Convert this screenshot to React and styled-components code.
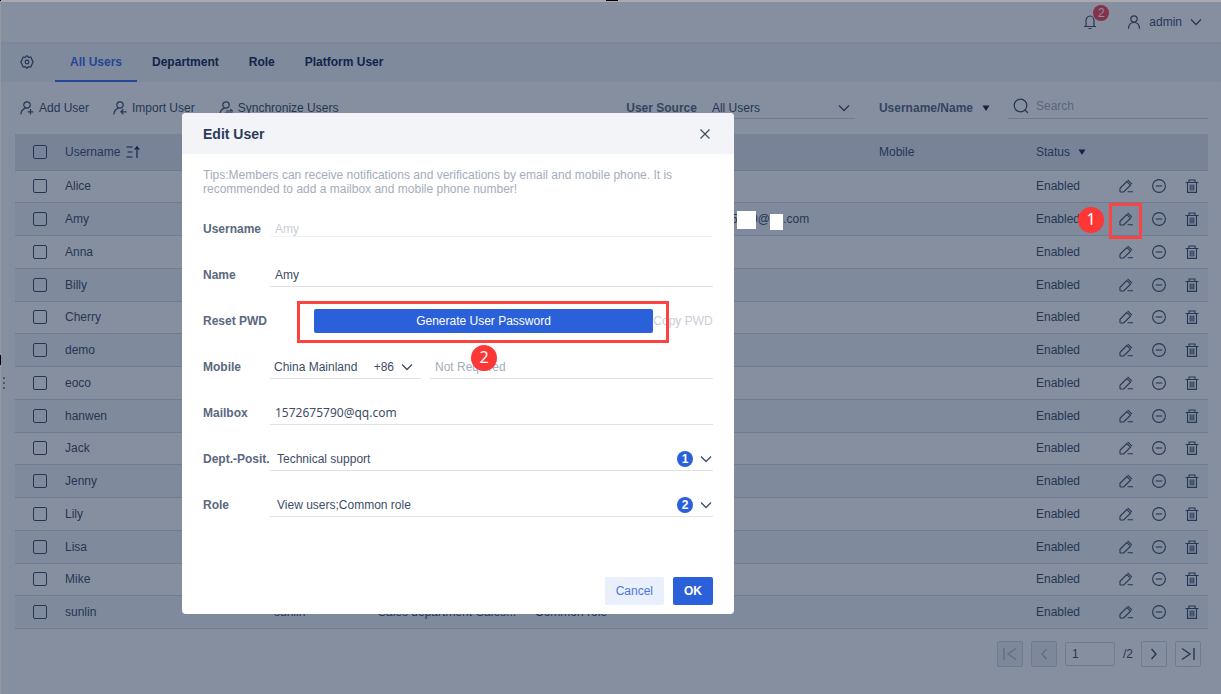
import React from 'react'
import styled, { createGlobalStyle } from 'styled-components'

const colors = {
  brand: '#2b60db',
  tab: '#3f6bea',
  text: '#3d4d66',
  heading: '#16284c',
  label: '#5a6880',
  muted: '#a4adbb',
  disabled: '#c9ced7',
  line: '#e0e2e6',
  rowLine: '#d1d6df',
  mark: '#fd4242',
  pin: '#fd3636',
}

const GlobalStyle = createGlobalStyle`
  * {
    box-sizing: border-box;
  }
  body {
    margin: 0;
    background: white;
    color: ${colors.text};
    font: 12px/16px "Liberation Sans", Arial, sans-serif;
  }
  button, input, select {
    font: inherit;
    color: inherit;
    margin: 0;
    padding: 0;
    border: 0;
    background: none;
    border-radius: 0;
    outline: 0;
  }
  button {
    cursor: pointer;
  }
`

const Svg = styled.svg`
  display: block;
  flex: none;
  fill: none;
  stroke: currentColor;
  stroke-width: ${props => props.$weight || 1};
`

const Icon = ({ size = 14, weight, children }) => (
  <Svg width={size} height={size} viewBox={`0 0 ${size} ${size}`} $weight={weight} aria-hidden="true">
    {children}
  </Svg>
)

const ChevronIcon = () => (
  <Icon size={12} weight={1.3}><path d="M1 3.5 6 8.5 11 3.5" /></Icon>
)

const CaretIcon = () => (
  <Icon size={8}><path d="M0.5 1.5h7L4 7z" fill="currentColor" stroke="none" /></Icon>
)

const GearIcon = () => (
  <Icon weight={1.2}>
    <path d="M5.4 2.4 7 0.7l1.600 1.700 2.300-0.400 0.900 2.400 1.400 2.600-1.400 2.600-0.900 2.400-2.300-0.400L7 13.300l-1.600-1.700-2.300 0.400-0.900-2.400L0.800 7l1.400-2.600L3.100 2z" strokeLinejoin="round" />
    <circle cx="7" cy="7" r="1.8" />
  </Icon>
)

const BellIcon = () => (
  <Icon size={16} weight={1.2}>
    <path d="M4 12V6.500a4 4.500 0 0 1 8 0V12M2 12.500h12M6.5 14.500h3" />
  </Icon>
)

const UserIcon = ({ action }) => (
  <Icon weight={1.2}>
    <circle cx="7" cy="4" r="3.2" />
    {action ? <path d="M0.8 13.5c0.4-3.5 2-5.5 4.7-6.3" /> : <path d="M1.5 13.8c0-4 2-6.3 5.5-6.3s5.5 2.3 5.5 6.3" />}
    {action === 'add' && <path d="M10.5 8v5.500M7.700 10.800h5.600" />}
    {action === 'import' && <path d="M13.5 10.800H8M10.400 8.200 7.900 10.800l2.500 2.600" />}
    {action === 'sync' && <path d="M7 10h6.5l-2.2-1.8M13.5 12H7l2.2 1.8" />}
  </Icon>
)

const SearchIcon = () => (
  <Icon size={16} weight={1.2}><circle cx="7.5" cy="7.5" r="6.3" /><path d="m12 12 3 3" /></Icon>
)

const SortIcon = () => (
  <Icon weight={1.2}>
    <path d="M0.5 2h6M1.5 7h5M0.5 12h6M11 13V2M8.7 4.6 11 1.8l2.3 2.8" />
  </Icon>
)

const EditIcon = () => (
  <Icon weight={1.1}>
    <path d="M1 13V9.300L7.800 2.500l3.700 3.700L4.700 13H1M8.600 0.800l4.400 4.400M8.600 12.800H14" />
  </Icon>
)

const DisableIcon = () => (
  <Icon weight={1.1}><circle cx="7" cy="7" r="6.400" /><path d="M3.800 7h6.400" /></Icon>
)

const TrashIcon = () => (
  <Icon weight={1.1}>
    <path d="M0.500 3.500h13M4 3.200V1h6v2.200M2.500 3.500v9.900h9V3.500M5.200 5.500v6M7 5.500v6M8.800 5.500v6" />
  </Icon>
)

const CloseIcon = () => (
  <Icon size={12} weight={1.2}><path d="m1.5 1.5 9 9M10.5 1.5l-9 9" /></Icon>
)

const Page = styled.div`
  position: relative;
  min-height: 100vh;
`

const Header = styled.header`
  height: 42px;
  padding: 2px 19px 0 0;
  display: flex;
  align-items: center;
  justify-content: flex-end;
  gap: 29px;
`

const BellButton = styled.button`
  position: relative;
`

const BellBadge = styled.span`
  position: absolute;
  top: -9px;
  left: 11px;
  width: 16px;
  height: 16px;
  border-radius: 50%;
  background: #fb4754;
  color: white;
`

const AccountButton = styled.button`
  display: flex;
  align-items: center;
  gap: 8px;
`

const TabBar = styled.nav`
  height: 40px;
  padding-left: 20px;
  display: flex;
  background: #f0f4f8;
  box-shadow: inset 0 2px 2px #eaeef3;
`

const SettingsButton = styled.button`
  width: 35px;
`

const Tab = styled.a`
  padding: 0 15px;
  line-height: 40px;
  font-weight: bold;
  text-decoration: none;
  color: ${props => (props.$active ? colors.tab : colors.heading)};
  box-shadow: inset 0 -2px ${props => (props.$active ? colors.tab : 'transparent')};
`

const Toolbar = styled.div`
  height: 52px;
  padding: 0 13px 0 20px;
  display: flex;
  align-items: center;
  gap: 24px;
`

const ToolButton = styled.button`
  display: flex;
  align-items: center;
  gap: 5px;
`

const Filters = styled.div`
  margin-left: auto;
  display: flex;
  align-items: center;
  gap: 24px;
`

const FilterLabel = styled.label`
  font-weight: bold;
  color: ${colors.label};
`

const SourceField = styled.div`
  display: flex;
  align-items: center;
  gap: 8px;
`

const SelectBox = styled.div`
  flex: ${props => (props.$width ? 'none' : 1)};
  width: ${props => (props.$width ? `${props.$width}px` : 'auto')};
  height: ${props => (props.$slim ? 22 : 24)}px;
  display: grid;
  align-items: center;
  border-bottom: 1px solid ${props => (props.$slim ? colors.rowLine : colors.line)};

  > * {
    grid-area: 1 / 1;
  }
`

const Select = styled.select`
  appearance: none;
  width: 100%;
  height: 100%;
  padding: 0 ${props => (props.$tight ? 4 : 7)}px;
`

const SelectEnd = styled.span`
  justify-self: end;
  padding-right: ${props => props.$inset || 1}px;
  display: flex;
  align-items: center;
  gap: 7px;
  pointer-events: none;
`

const FieldMenuButton = styled.button`
  display: flex;
  align-items: center;
  gap: 9px;
  margin-right: -6px;
  font-weight: bold;
  color: ${colors.label};

  svg {
    color: ${colors.heading};
  }
`

const SearchBox = styled.label`
  width: 200px;
  height: 22px;
  padding: 0 0 4px 5px;
  display: flex;
  align-items: center;
  gap: 7px;
  border-bottom: 1px solid ${colors.rowLine};
`

const SearchInput = styled.input`
  flex: 1;
  min-width: 0;

  &::placeholder {
    color: ${colors.muted};
  }
`

const TableWrapper = styled.main`
  padding: 0 13px 0 15px;
`

const Table = styled.table`
  width: 100%;
  height: 495px;
  table-layout: fixed;
  border-collapse: collapse;
`

const Col = styled.col`
  width: ${props => (props.$width ? `${props.$width}px` : 'auto')};
`

const HeadRow = styled.tr`
  height: 36px;
  background: #e2e6ee;
  border-bottom: 1px solid ${colors.rowLine};
`

const Row = styled.tr`
  border-bottom: 1px solid ${colors.rowLine};

  &:nth-child(even) {
    background: #f1f4f8;
  }
`

const HeadCell = styled.th`
  padding: 0 12px;
  font-weight: normal;
  text-align: left;
`

const HeadLabel = styled.span`
  display: flex;
  align-items: center;
  gap: ${props => props.$gap}px;

  svg {
    color: ${colors.heading};
  }
`

const Cell = styled.td`
  padding: 0 0 0 12px;
  white-space: nowrap;
`

const CheckCell = styled.td`
  padding: 0 0 0 18px;
`

const Checkbox = styled.input.attrs({ type: 'checkbox' })`
  display: block;
  appearance: none;
  width: 14px;
  height: 14px;
  border: 1px solid ${colors.text};
  border-radius: 2px;
`

const ActionCell = styled.td`
  padding: 0;
`

const Actions = styled.div`
  display: flex;
`

const ActionButton = styled.button`
  flex: 1;
  display: flex;
  justify-content: center;
`

const Pagination = styled.nav`
  padding: 12px 20px 0 0;
  display: flex;
  justify-content: flex-end;
  align-items: center;
  gap: 8px;
`

const PageButton = styled.button`
  width: 26px;
  height: 26px;
  display: flex;
  align-items: center;
  justify-content: center;
  border: 1px solid ${colors.rowLine};
  border-radius: 2px;

  &:disabled {
    color: #b4bcc9;
    background: #edf0f5;
  }
`

const PageInput = styled.input`
  width: 50px;
  height: 24px;
  padding: 0 6px;
  border: 1px solid ${colors.rowLine};
  border-radius: 2px;
`

const ResizeHandle = styled.div`
  position: absolute;
  top: 377px;
  left: 3px;
  display: grid;
  gap: 3px;

  i {
    width: 2px;
    height: 2px;
    background: #8792a6;
  }
`

const Overlay = styled.div`
  position: absolute;
  inset: 0;
  padding: 111px 0 0 181px;
  background: rgba(14, 32, 65, 0.5);
  border-top: 2px solid #a9a9ae;
  border-left: 1px solid #98989e;
`

const Dialog = styled.section`
  width: 552px;
  max-width: 100%;
  background: white;
  border-radius: 4px;
  overflow: hidden;
`

const DialogHeader = styled.header`
  height: 41px;
  padding: 0 23px 0 21px;
  display: flex;
  align-items: center;
  justify-content: space-between;
  background: #f2f4f8;
`

const DialogTitle = styled.h2`
  margin: 0;
  font-size: 14px;
  color: #2c3c5a;
`

const DialogBody = styled.form`
  padding: 14px 21px 0;
`

const Tips = styled.p`
  margin: 0 0 21px;
  line-height: 14px;
  color: ${colors.muted};
`

const Fields = styled.div`
  display: grid;
  gap: 22px;
`

const Field = styled.div`
  height: 24px;
  display: flex;
  align-items: center;
`

const FieldLabel = styled.label`
  width: 67px;
  flex: none;
  font-weight: bold;
  color: ${colors.label};
  white-space: nowrap;
`

const TextInput = styled.input`
  flex: 1;
  min-width: 0;
  height: 24px;
  padding: 0 5px;
  border-bottom: 1px solid ${colors.line};

  &::placeholder {
    color: ${colors.muted};
  }

  &:disabled {
    height: 16px;
    color: ${colors.disabled};
    border-color: #f0f1f4;
  }
`

const MailInput = styled(TextInput)`
  font-family: "Noto Sans", sans-serif;
`

const MobileFields = styled.div`
  flex: 1;
  display: flex;
  gap: 9px;
`

const CountBadge = styled.span`
  width: 16px;
  height: 16px;
  border-radius: 50%;
  background: ${colors.brand};
  color: white;
  font-weight: bold;
  text-align: center;
`

const GenerateWrapper = styled.div`
  position: relative;
  flex: 1;
  margin-left: 44px;
`

const GenerateButton = styled.button`
  width: 100%;
  height: 24px;
  display: block;
  background: ${colors.brand};
  border-radius: 2px;
  color: white;
`

const CopyButton = styled.button`
  width: 60px;
  color: ${colors.disabled};
`

const DialogFooter = styled.footer`
  padding: 60px 0 9px;
  display: flex;
  justify-content: flex-end;
  gap: 9px;
`

const DialogButton = styled.button`
  height: 28px;
  padding: 0 11px;
  border-radius: 2px;
  font-weight: ${props => (props.$primary ? 'bold' : 'normal')};
  background: ${props => (props.$primary ? colors.brand : '#e9effb')};
  color: ${props => (props.$primary ? 'white' : '#4a77e0')};
`

// Walkthrough marks drawn over the interface
const GenerateMark = styled.div`
  position: absolute;
  inset: -8px -16px -10px -17px;
  border: 3px solid ${colors.mark};
  pointer-events: none;
`

const EditMark = styled.div`
  position: absolute;
  top: 203px;
  right: 79px;
  width: 33px;
  height: 36px;
  border: 3px solid ${colors.mark};
`

const Pin = styled.span`
  position: absolute;
  top: ${props => props.$top}px;
  left: ${props => (props.$left ? `${props.$left}px` : 'auto')};
  right: ${props => (props.$right ? `${props.$right}px` : 'auto')};
  width: 26px;
  height: 26px;
  border-radius: 50%;
  background: ${colors.pin};
  color: white;
  font: 16px/24px "Noto Sans", sans-serif;
  text-align: center;
`

const Mask = styled.div`
  position: absolute;
  top: ${props => props.$top}px;
  left: ${props => props.$left}px;
  width: ${props => props.$width}px;
  height: ${props => props.$height}px;
  background: white;
`

const FrameTick = styled.div`
  position: absolute;
  top: ${props => props.$top || 0}px;
  left: ${props => props.$left || 0}px;
  width: ${props => props.$width}px;
  height: ${props => props.$height}px;
  background: black;
`

const tabs = ['All Users', 'Department', 'Role', 'Platform User']

const users = [
  { username: 'Alice' },
  { username: 'Amy', mailbox: '1572675790@qq.com' },
  { username: 'Anna' },
  { username: 'Billy' },
  { username: 'Cherry' },
  { username: 'demo' },
  { username: 'eoco' },
  { username: 'hanwen' },
  { username: 'Jack' },
  { username: 'Jenny' },
  { username: 'Lily' },
  { username: 'Lisa' },
  { username: 'Mike' },
  { username: 'sunlin', name: 'sunlin', department: 'Sales department-Sales...', role: 'Common role' },
]

const UserRow = ({ user }) => (
  <Row>
    <CheckCell><Checkbox aria-label={user.username} /></CheckCell>
    <Cell>{user.username}</Cell>
    <Cell>{user.name}</Cell>
    <Cell>{user.department}</Cell>
    <Cell>{user.role}</Cell>
    <Cell>{user.mailbox}</Cell>
    <Cell />
    <Cell>Enabled</Cell>
    <ActionCell>
      <Actions>
        <ActionButton aria-label="Edit"><EditIcon /></ActionButton>
        <ActionButton aria-label="Disable"><DisableIcon /></ActionButton>
        <ActionButton aria-label="Delete"><TrashIcon /></ActionButton>
      </Actions>
    </ActionCell>
  </Row>
)

const UserTable = () => (
  <TableWrapper>
    <Table>
      <colgroup>
        <Col $width={38} />
        <Col />
        <Col $width={104} />
        <Col $width={157} />
        <Col $width={156} />
        <Col $width={188} />
        <Col $width={157} />
        <Col $width={85} />
        <Col $width={99} />
      </colgroup>
      <thead>
        <HeadRow>
          <CheckCell><Checkbox aria-label="Select all" /></CheckCell>
          <HeadCell><HeadLabel $gap={6}>Username<SortIcon /></HeadLabel></HeadCell>
          <HeadCell />
          <HeadCell />
          <HeadCell />
          <HeadCell />
          <HeadCell>Mobile</HeadCell>
          <HeadCell><HeadLabel $gap={8}>Status<CaretIcon /></HeadLabel></HeadCell>
          <HeadCell />
        </HeadRow>
      </thead>
      <tbody>
        {users.map(user => <UserRow key={user.username} user={user} />)}
      </tbody>
    </Table>
  </TableWrapper>
)

const EditUserDialog = () => (
  <Dialog role="dialog" aria-labelledby="dialog-title">
    <DialogHeader>
      <DialogTitle id="dialog-title">Edit User</DialogTitle>
      <button aria-label="Close"><CloseIcon /></button>
    </DialogHeader>
    <DialogBody onSubmit={e => e.preventDefault()}>
      <Tips>
        Tips:Members can receive notifications and verifications by email and mobile phone. It is
        recommended to add a mailbox and mobile phone number!
      </Tips>
      <Fields>
        <Field>
          <FieldLabel htmlFor="username">Username</FieldLabel>
          <TextInput id="username" defaultValue="Amy" disabled />
        </Field>
        <Field>
          <FieldLabel htmlFor="name">Name</FieldLabel>
          <TextInput id="name" defaultValue="Amy" />
        </Field>
        <Field>
          <FieldLabel htmlFor="generate">Reset PWD</FieldLabel>
          <GenerateWrapper>
            <GenerateButton id="generate" type="button">Generate User Password</GenerateButton>
            <GenerateMark />
            <Pin $top={36} $left={157}>2</Pin>
          </GenerateWrapper>
          <CopyButton type="button">Copy PWD</CopyButton>
        </Field>
        <Field>
          <FieldLabel htmlFor="mobile">Mobile</FieldLabel>
          <MobileFields>
            <SelectBox $width={151}>
              <Select aria-label="Country" $tight>
                <option>China Mainland</option>
              </Select>
              <SelectEnd $inset={8}>+86<ChevronIcon /></SelectEnd>
            </SelectBox>
            <TextInput id="mobile" placeholder="Not Required" />
          </MobileFields>
        </Field>
        <Field>
          <FieldLabel htmlFor="mailbox">Mailbox</FieldLabel>
          <MailInput id="mailbox" defaultValue="1572675790@qq.com" />
        </Field>
        <Field>
          <FieldLabel htmlFor="department">Dept.-Posit.</FieldLabel>
          <SelectBox>
            <Select id="department">
              <option>Technical support</option>
            </Select>
            <SelectEnd><CountBadge>1</CountBadge><ChevronIcon /></SelectEnd>
          </SelectBox>
        </Field>
        <Field>
          <FieldLabel htmlFor="role">Role</FieldLabel>
          <SelectBox>
            <Select id="role">
              <option>View users;Common role</option>
            </Select>
            <SelectEnd><CountBadge>2</CountBadge><ChevronIcon /></SelectEnd>
          </SelectBox>
        </Field>
      </Fields>
      <DialogFooter>
        <DialogButton type="button">Cancel</DialogButton>
        <DialogButton $primary>OK</DialogButton>
      </DialogFooter>
    </DialogBody>
  </Dialog>
)

const App = () => (
  <Page>
    <GlobalStyle />
    <Header>
      <BellButton aria-label="Notifications"><BellIcon /><BellBadge>2</BellBadge></BellButton>
      <AccountButton><UserIcon />admin<ChevronIcon /></AccountButton>
    </Header>
    <TabBar>
      <SettingsButton aria-label="Settings"><GearIcon /></SettingsButton>
      {tabs.map((tab, i) => <Tab key={tab} href="#" $active={i === 0}>{tab}</Tab>)}
    </TabBar>
    <Toolbar>
      <ToolButton><UserIcon action="add" />Add User</ToolButton>
      <ToolButton><UserIcon action="import" />Import User</ToolButton>
      <ToolButton><UserIcon action="sync" />Synchronize Users</ToolButton>
      <Filters>
        <SourceField>
          <FilterLabel htmlFor="source">User Source</FilterLabel>
          <SelectBox $width={150} $slim>
            <Select id="source"><option>All Users</option></Select>
            <SelectEnd $inset={5}><ChevronIcon /></SelectEnd>
          </SelectBox>
        </SourceField>
        <FieldMenuButton>Username/Name<CaretIcon /></FieldMenuButton>
        <SearchBox>
          <SearchIcon />
          <SearchInput type="text" placeholder="Search" aria-label="Search" />
        </SearchBox>
      </Filters>
    </Toolbar>
    <UserTable />
    <Pagination>
      <PageButton disabled aria-label="First page">
        <Icon size={16} weight={1.4}><path d="M2 2v12M14 2.5 6 8l8 5.5" /></Icon>
      </PageButton>
      <PageButton disabled aria-label="Previous page">
        <Icon size={16} weight={1.4}><path d="M10.5 3 6 8l4.5 5" /></Icon>
      </PageButton>
      <PageInput aria-label="Page" defaultValue="1" />
      <span>/2</span>
      <PageButton aria-label="Next page">
        <Icon size={16} weight={1.4}><path d="M5.5 3 10 8l-4.5 5" /></Icon>
      </PageButton>
      <PageButton aria-label="Last page">
        <Icon size={16} weight={1.4}><path d="M14 2v12M2 2.5 10 8l-8 5.5" /></Icon>
      </PageButton>
    </Pagination>
    <ResizeHandle><i /><i /><i /></ResizeHandle>
    <Overlay>
      <EditUserDialog />
    </Overlay>
    <EditMark />
    <Pin $top={207} $right={117}>1</Pin>
    <Mask $top={211} $left={737} $width={19} $height={18} />
    <Mask $top={214} $left={770} $width={13} $height={16} />
    <FrameTick $width={1} $height={1} />
    <FrameTick $left={606} $width={12} $height={1} />
    <FrameTick $top={355} $width={1} $height={10} />
  </Page>
)

export default App
